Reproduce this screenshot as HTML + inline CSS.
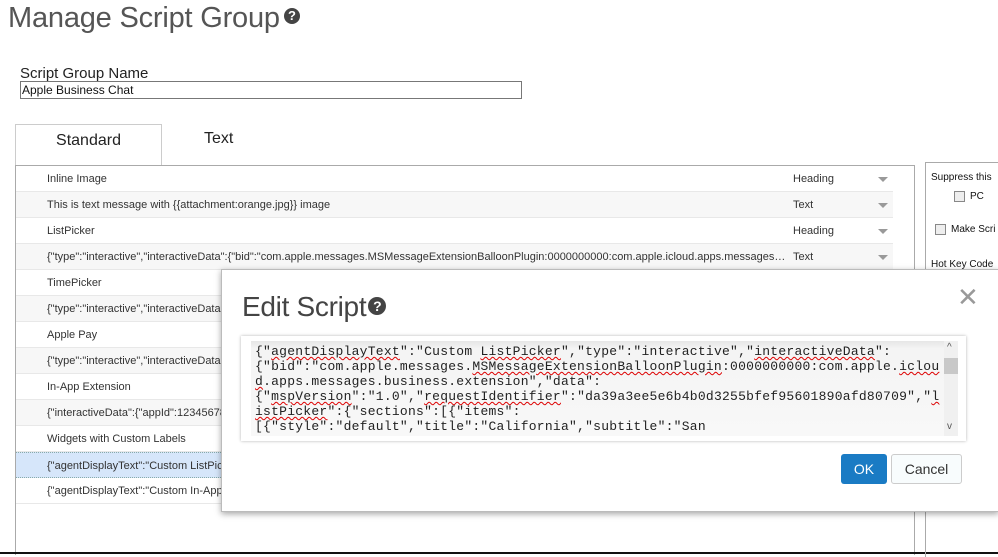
<!DOCTYPE html>
<html><head><meta charset="utf-8"><style>
*{box-sizing:border-box;margin:0;padding:0}
body{width:998px;height:554px;overflow:hidden;background:#fff;font-family:"Liberation Sans",Arial,sans-serif;position:relative;color:#333}
.abs{position:absolute}
h1{position:absolute;left:8px;top:2px;font-size:29px;font-weight:normal;color:#555;letter-spacing:-0.2px}
.q{display:inline-block;width:16px;height:16px;border-radius:50%;background:#444;color:#fff;font-size:13px;font-weight:bold;text-align:center;line-height:16px;vertical-align:top}
.row{position:absolute;left:16px;width:877px;height:26px;border-bottom:1px solid #e8e8e8;font-size:11px;line-height:27px;color:#333}
.row span.t{position:absolute;left:31px;max-width:740px;white-space:nowrap;overflow:hidden;text-overflow:ellipsis}
.row span.k{position:absolute;left:777px}
.row span.a{position:absolute;left:862px;top:11px;width:0;height:0;border-left:5px solid transparent;border-right:5px solid transparent;border-top:5px solid #999}
.alt{background:#f7f7f7}
.mono{font-family:"Liberation Mono","Courier New",monospace;font-size:13px;letter-spacing:0.25px;line-height:15px;color:#222;white-space:pre}
.sq{text-decoration:underline wavy #d00;text-decoration-thickness:1px}
</style></head><body>
<h1>Manage Script Group<span class="q" style="margin-left:4px;margin-top:6px">?</span></h1>
<div class="abs" style="left:20px;top:65px;font-size:15px;color:#222">Script Group Name</div>
<div class="abs" style="left:20px;top:81px;width:502px;height:18px;border:1px solid #777;font-size:12px;line-height:17px;padding-left:1px;color:#111">Apple Business Chat</div>
<div class="abs" style="left:15px;top:124px;width:147px;height:42px;border:1px solid #ccc;border-bottom:none;background:#fff;font-size:16px;text-align:center;line-height:31px;color:#222">Standard</div>
<div class="abs" style="left:204px;top:130px;font-size:16px;color:#222">Text</div>
<div class="abs" style="left:15px;top:165px;width:900px;height:390px;border-left:1px solid #aaa;border-top:1px solid #aaa;border-right:1px solid #aaa"></div>
<div class="abs" style="left:0;top:552px;width:998px;height:2px;background:#111"></div>
<div class="abs" style="left:925px;top:162px;width:80px;height:395px;border-left:1px solid #aaa;border-top:1px solid #aaa"></div>
<div class="abs" style="left:931px;top:172px;font-size:10px;color:#111">Suppress this</div>
<div class="abs" style="left:954px;top:191px;width:11px;height:11px;border:1px solid #888;background:#eee"></div>
<div class="abs" style="left:970px;top:191px;font-size:10px;color:#111">PC</div>
<div class="abs" style="left:935px;top:224px;width:11px;height:11px;border:1px solid #888;background:#eee"></div>
<div class="abs" style="left:951px;top:224px;font-size:10px;color:#111">Make Scri</div>
<div class="abs" style="left:931px;top:259px;font-size:10px;color:#111">Hot Key Code</div>
<div class="abs" style="left:932px;top:290px;width:66px;height:1px;background:#aaa"></div>
<div class="row" style="top:166px"><span class="t">Inline Image</span><span class="k">Heading</span><span class="a"></span></div>
<div class="row alt" style="top:192px"><span class="t">This is text message with {{attachment:orange.jpg}} image</span><span class="k">Text</span><span class="a"></span></div>
<div class="row" style="top:218px"><span class="t">ListPicker</span><span class="k">Heading</span><span class="a"></span></div>
<div class="row alt" style="top:244px"><span class="t">{"type":"interactive","interactiveData":{"bid":"com.apple.messages.MSMessageExtensionBalloonPlugin:0000000000:com.apple.icloud.apps.messages.business.extension"</span><span class="k">Text</span><span class="a"></span></div>
<div class="row" style="top:270px"><span class="t">TimePicker</span></div>
<div class="row alt" style="top:296px"><span class="t">{"type":"interactive","interactiveData"</span></div>
<div class="row" style="top:322px"><span class="t">Apple Pay</span></div>
<div class="row alt" style="top:348px"><span class="t">{"type":"interactive","interactiveData"</span></div>
<div class="row" style="top:374px"><span class="t">In-App Extension</span></div>
<div class="row alt" style="top:400px"><span class="t">{"interactiveData":{"appId":12345678</span></div>
<div class="row" style="top:426px"><span class="t">Widgets with Custom Labels</span></div>
<div class="row" style="top:452px;background:#d6e6fa;border-top:1px dotted #8aa;border-bottom:1px dotted #8aa"><span class="t">{"agentDisplayText":"Custom ListPick</span></div>
<div class="row" style="top:478px"><span class="t">{"agentDisplayText":"Custom In-App</span></div>
<div class="abs" style="left:221px;top:269px;width:778px;height:243px;background:#fff;border:1px solid #bbb;box-shadow:0 2px 6px rgba(0,0,0,.35)"></div>
<div class="abs" style="left:242px;top:291px;font-size:28px;color:#444;letter-spacing:-0.3px">Edit Script<span class="q" style="margin-left:2px;margin-top:6px;width:18px;height:18px;line-height:18px;font-size:14px">?</span></div>
<div class="abs" style="left:957px;top:284px;font-size:26px;color:#999;line-height:26px">✕</div>
<div class="abs" style="left:241px;top:336px;width:725px;height:105px;background:#fff;box-shadow:0 0 3px rgba(0,0,0,.3)"></div>
<div class="abs" style="left:251px;top:341px;width:707px;height:95px;background:linear-gradient(#e6e6e6,#f4f4f4 8%,#f8f8f8);overflow:hidden">
<div class="mono" style="position:absolute;left:4px;top:3px">{"<span class="sq">agentDisplayText</span>":"Custom <span class="sq">ListPicker</span>","type":"interactive","<span class="sq">interactiveData</span>":
{"bid":"com.apple.messages.<span class="sq">MSMessageExtensionBalloonPlugin</span>:0000000000:com.apple.<span class="sq">iclou</span>
<span class="sq">d</span>.apps.messages.business.extension","data":
{"<span class="sq">mspVersion</span>":"1.0","<span class="sq">requestIdentifier</span>":"da39a3ee5e6b4b0d3255bfef95601890afd80709","<span class="sq">l</span>
<span class="sq">istPicker</span>":{"sections":[{"items":
[{"style":"default","title":"California","subtitle":"San</div>
<div class="abs" style="left:693px;top:0;width:14px;height:95px;background:#f0f0f0"></div>
<div class="abs" style="left:693px;top:17px;width:14px;height:16px;background:#c8c8c8"></div>
<div class="abs" style="left:696px;top:1px;font-size:10px;color:#555">^</div>
<div class="abs" style="left:696px;top:80px;font-size:10px;color:#555">v</div>
</div>
<div class="abs" style="left:841px;top:454px;width:46px;height:30px;background:#1a7bc4;border-radius:3px;color:#fff;font-size:14px;text-align:center;line-height:30px">OK</div>
<div class="abs" style="left:891px;top:454px;width:71px;height:30px;background:#f8fcfd;border:1px solid #ccc;border-radius:3px;color:#333;font-size:14px;text-align:center;line-height:28px">Cancel</div>
</body></html>
